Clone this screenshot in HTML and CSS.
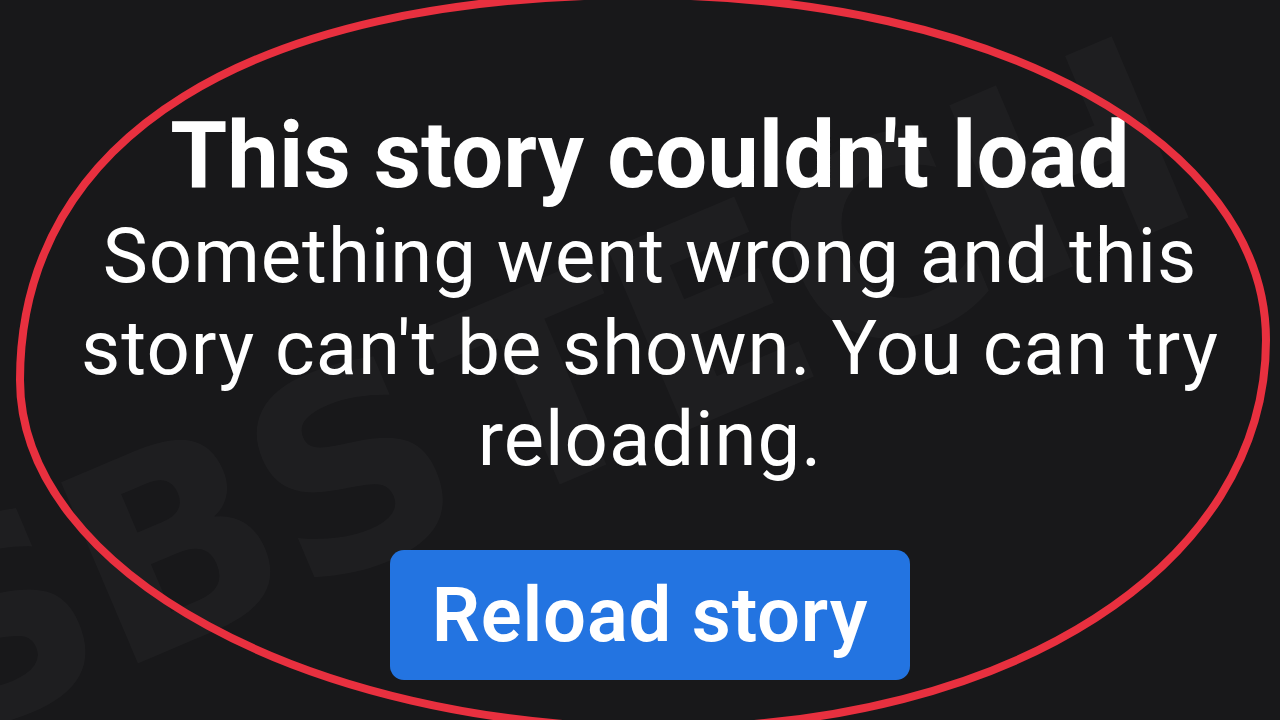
FILE: index.html
```html
<!DOCTYPE html>
<html lang="en">
<head>
<meta charset="utf-8">
<title>This story couldn't load</title>
<link rel="stylesheet" href="styles.css">
</head>
<body>
<div class="screen">
  <div class="watermark" aria-hidden="true">SBS TECH</div>
  <main class="message">
    <h1 class="title">This story couldn't load</h1>
    <p class="body">Something went wrong and this<br>story can't be shown. You can try<br>reloading.</p>
    <button class="reload" type="button">Reload story</button>
  </main>
  <svg class="ring" width="1280" height="720" viewBox="0 0 1280 720" aria-hidden="true">
    <path fill="none" stroke="#e8303f" stroke-width="8" d="M20,380 C20,137.5 249.4,-5 640,-5 C996.8,-5 1266,143.4 1266,340 C1266,565 1011.5,728 660,728 C308,728 20,571.4 20,380 Z"/>
  </svg>
</div>
</body>
</html>
```
FILE: styles.css
```css
html, body {
  margin: 0;
  padding: 0;
  background: #18181a;
}

.screen {
  position: relative;
  width: 1280px;
  height: 720px;
  overflow: hidden;
  background: #18181a;
  font-family: Roboto, "Noto Sans", "Liberation Sans", sans-serif;
  color: #ffffff;
}

.watermark {
  position: absolute;
  left: -40px;
  top: 510px;
  font-family: "DejaVu Sans", "Liberation Sans", sans-serif;
  font-weight: 700;
  font-size: 270px;
  line-height: 280px;
  height: 280px;
  letter-spacing: -6px;
  word-spacing: -60px;
  white-space: nowrap;
  color: rgba(255, 255, 255, 0.026);
  transform: rotate(-23deg);
  transform-origin: left bottom;
}

.message {
  position: relative;
  display: flex;
  flex-direction: column;
  align-items: center;
  padding: 110px 0 0 20px;
  text-align: center;
}

.title {
  margin: 0;
  font-size: 92px;
  font-weight: 700;
  line-height: 92px;
  letter-spacing: 0.1px;
}

.body {
  margin: 9px 0 0;
  font-size: 76px;
  font-weight: 400;
  line-height: 91.5px;
  letter-spacing: 1px;
}

.reload {
  margin-top: 64px;
  height: 130px;
  padding: 0 42px;
  border: none;
  border-radius: 14px;
  background: #2374e1;
  color: #ffffff;
  font-family: Roboto, "Noto Sans", "Liberation Sans", sans-serif;
  font-size: 76px;
  font-weight: 600;
  line-height: 130px;
  letter-spacing: 0.8px;
}

.ring {
  position: absolute;
  left: 0;
  top: 0;
  pointer-events: none;
}
```
